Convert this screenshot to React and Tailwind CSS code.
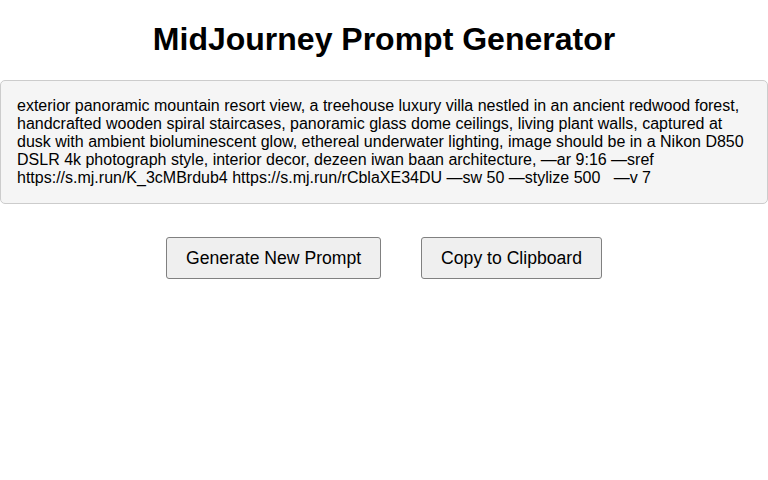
export default function App() {
  return (
    <div className="min-h-screen bg-white text-black" style={{ fontFamily: '"Liberation Sans", Arial, sans-serif' }}>
      <h1 className="text-[32px] font-bold text-center my-[21.44px] leading-[37px]">MidJourney Prompt Generator</h1>
      <div className="border border-[#cccccc] rounded-[5px] bg-[#f5f5f5] p-4 text-base leading-[18px]">
        exterior panoramic mountain resort view, a treehouse luxury villa nestled in an ancient redwood forest, handcrafted wooden spiral staircases, panoramic glass dome ceilings, living plant walls, captured at dusk with ambient bioluminescent glow, ethereal underwater lighting, image should be in a Nikon D850 DSLR 4k photograph style, interior decor, dezeen iwan baan architecture, —ar 9:16 —sref https://s.mj.run/K_3cMBrdub4 https://s.mj.run/rCblaXE34DU —sw 50 —stylize 500 &nbsp; —v 7
      </div>
      <div className="flex justify-center gap-10 mt-[33px]">
        <button className="px-[19px] py-[10px] text-[17.6px] leading-[20px] bg-[#efefef] border border-[#808080] rounded-[3px] text-black">Generate New Prompt</button>
        <button className="px-[19px] py-[10px] text-[17.6px] leading-[20px] bg-[#efefef] border border-[#808080] rounded-[3px] text-black">Copy to Clipboard</button>
      </div>
    </div>
  );
}
